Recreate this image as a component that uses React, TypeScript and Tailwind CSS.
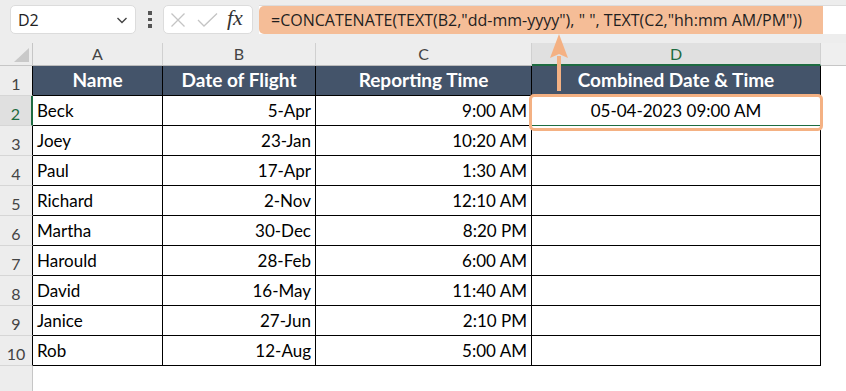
import React from "react";

const ROWS = [
  ["Beck", "5-Apr", "9:00 AM"],
  ["Joey", "23-Jan", "10:20 AM"],
  ["Paul", "17-Apr", "1:30 AM"],
  ["Richard", "2-Nov", "12:10 AM"],
  ["Martha", "30-Dec", "8:20 PM"],
  ["Harould", "28-Feb", "6:00 AM"],
  ["David", "16-May", "11:40 AM"],
  ["Janice", "27-Jun", "2:10 PM"],
  ["Rob", "12-Aug", "5:00 AM"],
];

const cell = "h-full flex items-center border-r border-b border-black px-[4px] shrink-0";

function Toolbar() {
  return (
    <div className="flex items-start h-[43px] bg-[#ededed] pt-[5px] font-['Open_Sans',sans-serif]">
      <div className="ml-[10px] w-[126px] h-[29px] bg-white rounded-[5px] border border-[#dcdcdc] flex items-center pl-[7px] pr-[6px] text-[16px] text-[#222]">
        <span className="flex-1">D2</span>
        <svg width="14" height="14" viewBox="0 0 14 14">
          <path d="M2.5 5 L7 9.5 L11.5 5" fill="none" stroke="#444" strokeWidth="1.4" />
        </svg>
      </div>
      <div className="w-[27px] h-[29px] flex flex-col items-center justify-center gap-[3px]">
        <span className="w-[4px] h-[3.5px] bg-[#555]" />
        <span className="w-[4px] h-[3.5px] bg-[#555]" />
        <span className="w-[4px] h-[3.5px] bg-[#555]" />
      </div>
      <div className="w-[90px] h-[29px] bg-white rounded-[5px] border border-[#dcdcdc] flex items-center pl-[6px]">
        <svg width="16" height="16" viewBox="0 0 16 16">
          <path d="M1.5 1.5 L14.5 14.5 M14.5 1.5 L1.5 14.5" stroke="#c4c4c4" strokeWidth="1.3" />
        </svg>
        <svg className="ml-[11px]" width="21" height="16" viewBox="0 0 21 16">
          <path d="M1 8 L7 14 L20 1.5" fill="none" stroke="#c4c4c4" strokeWidth="1.3" />
        </svg>
        <span className="ml-[9px] text-[22px] italic text-[#333] font-['Liberation_Serif',serif] leading-none -mt-[3px]">
          fx
        </span>
      </div>
      <div className="ml-[6px] flex-1 h-[29px] bg-white border-t border-[#dcdcdc] flex">
        <div className="w-[564px] h-full bg-[#f5bd97] rounded-l-[5px] flex items-center pl-[12px] text-[16px] text-[#1f1f1f] whitespace-nowrap">
          =CONCATENATE(TEXT(B2,"dd-mm-yyyy"), " ", TEXT(C2,"hh:mm AM/PM"))
        </div>
      </div>
    </div>
  );
}

function ColumnHeaders() {
  const cols = [
    { l: "A", w: "w-[130px]" },
    { l: "B", w: "w-[153px]" },
    { l: "C", w: "w-[216px]" },
  ];
  return (
    <div className="flex h-[23px] text-[16px] text-[#444]">
      <div className="w-[33px] h-full bg-[#ededed] border-r border-b border-[#c6c6c6] relative shrink-0">
        <svg className="absolute right-[3px] bottom-[3px]" width="15" height="14" viewBox="0 0 15 14">
          <path d="M15 0 L15 14 L0 14 Z" fill="#c9c9c9" />
        </svg>
      </div>
      {cols.map((c) => (
        <div
          key={c.l}
          className={`${c.w} h-full shrink-0 bg-[#ededed] border-r border-[#d0d0d0] border-b border-b-[#bcbcbc] flex items-center justify-center`}
        >
          {c.l}
        </div>
      ))}
      <div className="w-[289px] h-full shrink-0 bg-[#e0e0e0] border-r border-[#d0d0d0] border-b-2 border-b-[#1e6b41] flex items-center justify-center text-[#1e6b41]">
        D
      </div>
      <div className="flex-1 h-full bg-[#efefef] border-b border-[#c6c6c6]" />
    </div>
  );
}

function RowHeader({ n, active }: { n: number; active?: boolean }) {
  return (
    <div
      className={`w-[33px] h-full shrink-0 flex items-center justify-center pt-[6px] border-b border-b-[#d6d6d6] text-[16px] ${
        active
          ? "bg-[#e0e0e0] text-[#1e6b41] border-r-2 border-r-[#1e6b41]"
          : "bg-[#ededed] text-[#444] border-r border-r-black"
      }`}
    >
      {n}
    </div>
  );
}

export default function App() {
  return (
    <div className="w-[846px] h-[391px] bg-white overflow-hidden relative font-['Lato',sans-serif]">
      <Toolbar />
      <ColumnHeaders />
      <div className="flex h-[30px]">
        <RowHeader n={1} />
        <div className="flex h-full bg-[#44546a] text-white font-bold text-[19px]">
          <div className={`${cell} w-[130px] justify-center`}>Name</div>
          <div className={`${cell} w-[153px] justify-center`}>Date of Flight</div>
          <div className={`${cell} w-[216px] justify-center`}>Reporting Time</div>
          <div className={`${cell} w-[289px] justify-center`}>Combined Date &amp; Time</div>
        </div>
      </div>
      {ROWS.map((r, i) => (
        <div key={r[0]} className="flex h-[30px] text-[17px] text-black">
          <RowHeader n={i + 2} active={i === 0} />
          <div className={`${cell} w-[130px]`}>{r[0]}</div>
          <div className={`${cell} w-[153px] justify-end`}>{r[1]}</div>
          <div className={`${cell} w-[216px] justify-end`}>{r[2]}</div>
          <div className={`${cell} w-[289px] justify-center ${i === 0 ? "border-b-[#1e6b41]" : ""}`}>
            {i === 0 ? "05-04-2023 09:00 AM" : ""}
          </div>
        </div>
      ))}
      <div className="flex h-[30px]">
        <div className="w-[33px] h-full bg-[#ededed] border-r border-[#c6c6c6]" />
      </div>

      {/* annotation: highlight box on D2 */}
      <div className="absolute left-[529px] top-[94px] w-[294px] h-[37px] border-[3px] border-[#f4b183] rounded-[5px]" />
      {/* annotation: arrow from D2 up to formula bar */}
      <svg className="absolute left-[548px] top-[34px]" width="22" height="58" viewBox="0 0 22 58">
        <path d="M11 22 L11 57" stroke="#f4b183" strokeWidth="4" />
        <path d="M2 24 L11 0 L20 24 L11 20 Z" fill="#f4b183" />
      </svg>
    </div>
  );
}
